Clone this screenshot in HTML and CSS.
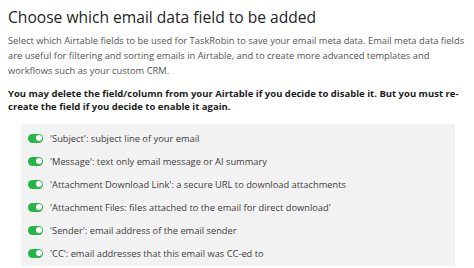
FILE: index.html
```html
<!DOCTYPE html>
<html>
<head>
<meta charset="utf-8">
<link rel="stylesheet" href="styles.css">
</head>
<body>
<div class="page">
  <h1 class="title">Choose which email data field to be added</h1>
  <p class="intro">Select which Airtable fields to be used for TaskRobin to save your email meta data. Email meta data fields<br>are useful for filtering and sorting emails in Airtable, and to create more advanced templates and<br>workflows such as your custom CRM.</p>
  <p class="warn">You may delete the field/column from your Airtable if you decide to disable it. But you must re-<br>create the field if you decide to enable it again.</p>
  <ul class="fields">
    <li class="field"><span class="toggle"></span><span>'Subject': subject line of your email</span></li>
    <li class="field"><span class="toggle"></span><span>'Message': text only email message or AI summary</span></li>
    <li class="field"><span class="toggle"></span><span>'Attachment Download Link': a secure URL to download attachments</span></li>
    <li class="field"><span class="toggle"></span><span>'Attachment Files: files attached to the email for direct download'</span></li>
    <li class="field"><span class="toggle"></span><span>'Sender': email address of the email sender</span></li>
    <li class="field"><span class="toggle"></span><span>'CC': email addresses that this email was CC-ed to</span></li>
  </ul>
</div>
</body>
</html>
```

FILE: styles.css
```css
html, body {
  margin: 0;
  padding: 0;
  background: #ffffff;
}
.page {
  padding: 6px 8px 0 8px;
  font-family: "Open Sans", "Noto Sans", sans-serif;
  white-space: nowrap;
}
.title {
  margin: 0;
  font-size: 15.6px;
  font-weight: 400;
  color: #232323;
  line-height: 22px;
}
.intro {
  margin: 5px 0 0 0;
  font-size: 9.35px;
  line-height: 15px;
  color: #555555;
}
.warn {
  margin: 8.5px 0 0 0;
  font-size: 9.5px;
  line-height: 13.5px;
  font-weight: 700;
  color: #1c1c1c;
}
.fields {
  list-style: none;
  margin: 10px 0 0 13px;
  padding: 3px 0 1px 7px;
  width: 427px;
  background: #f2f2f2;
}
.field {
  display: flex;
  align-items: center;
  gap: 7px;
  height: 23px;
  font-size: 9.3px;
  color: #404040;
}
.toggle {
  position: relative;
  flex: none;
  width: 15px;
  height: 9px;
  border-radius: 4.5px;
  background: #27b449;
}
.toggle::after {
  content: "";
  position: absolute;
  right: 1.5px;
  top: 1.5px;
  width: 6px;
  height: 6px;
  border-radius: 50%;
  background: #ffffff;
}
```
